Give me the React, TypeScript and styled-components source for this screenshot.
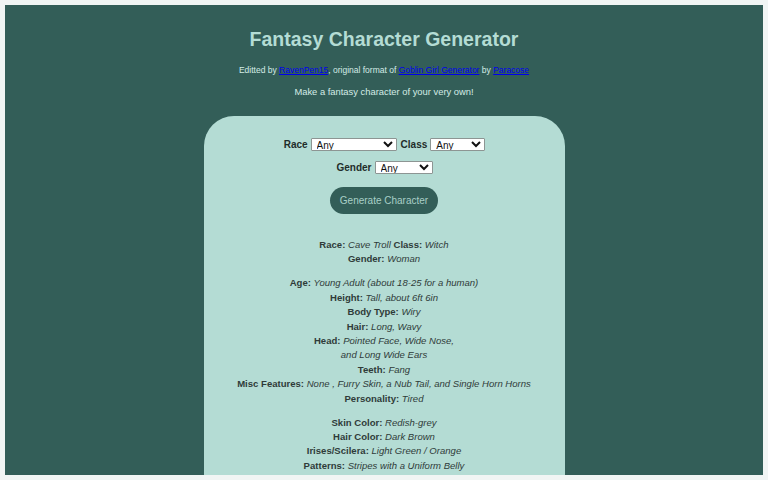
import styled, { createGlobalStyle } from "styled-components";

const GlobalStyle = createGlobalStyle`
    html, body {
        margin: 0;
        padding: 0;
        background-color: #f1f5f4;
        font-family: "Liberation Sans", Arial, sans-serif;
    }
`;

const Page = styled.div`
    margin: 5px;
    height: 470px;
    background-color: #335e58;
    overflow: hidden;
    display: flex;
    flex-direction: column;
    align-items: center;
    padding-top: 23px;
    box-sizing: border-box;
`;

const Title = styled.h1`
    margin: 0;
    font-size: 19.5px;
    line-height: 23px;
    font-weight: 700;
    color: #b4dcd4;
`;

const Credits = styled.p`
    margin: 14px 0 0;
    font-size: 8.5px;
    line-height: 10px;
    color: #d4ece6;

    a {
        color: #0000ee;
    }
`;

const Tagline = styled.p`
    margin: 11px 0 0;
    font-size: 9.4px;
    line-height: 12px;
    color: #d4ece6;
`;

const Card = styled.section`
    margin-top: 18px;
    width: 361px;
    flex: 1;
    background-color: #b4dcd4;
    border-radius: 30px 30px 0 0;
    padding-top: 21px;
    box-sizing: border-box;
    display: flex;
    flex-direction: column;
    align-items: center;
`;

const FormRow = styled.div`
    display: flex;
    align-items: center;
    gap: 3px;
    height: 14px;
    margin-bottom: 9px;
`;

const Label = styled.label`
    font-size: 10px;
    font-weight: 700;
    color: #1f2d2a;
    margin-left: 1px;
`;

const Select = styled.select<{ $width: number }>`
    width: ${(p) => p.$width}px;
    height: 13px;
    font-family: "Liberation Sans", Arial, sans-serif;
    font-size: 10px;
    padding: 0 0 0 1px;
    border: 1px solid #8d9593;
    border-radius: 1px;
    background-color: #fff;
    color: #111;
`;

const Button = styled.button`
    margin-top: 4px;
    width: 108px;
    height: 27px;
    border: none;
    border-radius: 14px;
    background-color: #335e58;
    color: #a9cfc7;
    font-family: "Liberation Sans", Arial, sans-serif;
    font-size: 10px;
`;

const Results = styled.div`
    margin-top: 24px;
    text-align: center;
    font-size: 9.55px;
    line-height: 14.4px;
    color: #2f3b39;
`;

const Block = styled.p`
    margin: 0 0 9.6px;
`;

const Key = styled.b`
    font-weight: 700;
`;

const Value = styled.i``;

function Field({ name, value }: { name: string; value: React.ReactNode }) {
    return (
        <>
            <Key>{name}:</Key> <Value>{value}</Value>
        </>
    );
}

export default function App() {
    return (
        <>
            <GlobalStyle />
            <Page>
                <Title>Fantasy Character Generator</Title>
                <Credits>
                    Editted by <a href="#">RavenPen15</a>, original format of{" "}
                    <a href="#">Goblin Girl Generator</a> by <a href="#">Paracose</a>
                </Credits>
                <Tagline>Make a fantasy character of your very own!</Tagline>
                <Card>
                    <FormRow>
                        <Label>Race</Label>
                        <Select $width={86}>
                            <option>Any</option>
                        </Select>
                        <Label>Class</Label>
                        <Select $width={55}>
                            <option>Any</option>
                        </Select>
                    </FormRow>
                    <FormRow>
                        <Label>Gender</Label>
                        <Select $width={58}>
                            <option>Any</option>
                        </Select>
                    </FormRow>
                    <Button>Generate Character</Button>
                    <Results>
                        <Block>
                            <Field name="Race" value="Cave Troll" />{" "}
                            <Field name="Class" value="Witch" />
                            <br />
                            <Field name="Gender" value="Woman" />
                        </Block>
                        <Block>
                            <Field name="Age" value="Young Adult (about 18-25 for a human)" />
                            <br />
                            <Field name="Height" value="Tall, about 6ft 6in" />
                            <br />
                            <Field name="Body Type" value="Wiry" />
                            <br />
                            <Field name="Hair" value="Long, Wavy" />
                            <br />
                            <Field
                                name="Head"
                                value={
                                    <>
                                        Pointed Face, Wide Nose,
                                        <br />
                                        and Long Wide Ears
                                    </>
                                }
                            />
                            <br />
                            <Field name="Teeth" value="Fang" />
                            <br />
                            <Field
                                name="Misc Features"
                                value="None , Furry Skin, a Nub Tail, and Single Horn Horns"
                            />
                            <br />
                            <Field name="Personality" value="Tired" />
                        </Block>
                        <Block>
                            <Field name="Skin Color" value="Redish-grey" />
                            <br />
                            <Field name="Hair Color" value="Dark Brown" />
                            <br />
                            <Field name="Irises/Scilera" value="Light Green / Orange" />
                            <br />
                            <Field name="Patterns" value="Stripes with a Uniform Belly" />
                        </Block>
                    </Results>
                </Card>
            </Page>
        </>
    );
}
